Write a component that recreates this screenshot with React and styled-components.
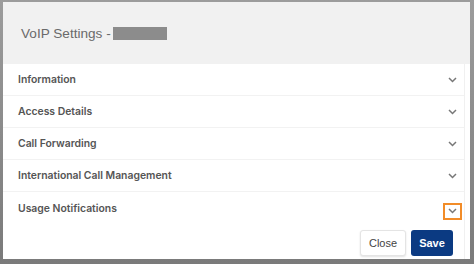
import React from "react";
import styled, { createGlobalStyle } from "styled-components";

const Global = createGlobalStyle`
  html, body { margin: 0; padding: 0; }
  body { background: #8d8d8d; width: 474px; height: 264px; overflow: hidden; }
`;

const Backdrop = styled.div`
  width: 474px;
  height: 264px;
  box-sizing: border-box;
  padding: 2px 4px 5px 3px;
  background: linear-gradient(#9c9c9c, #7a7a7a);
`;

const Modal = styled.div`
  height: 100%;
  background: #fff;
  display: flex;
  flex-direction: column;
  font-family: Inter, "Liberation Sans", sans-serif;
`;

const Header = styled.div`
  height: 62px;
  background: #f1f1f1;
  display: flex;
  align-items: center;
  padding-left: 18px;
  box-sizing: border-box;
`;

const Title = styled.h1`
  margin: 0;
  font-family: "Liberation Sans", Arial, sans-serif;
  font-weight: 400;
  font-size: 13.6px;
  color: #6a6a6a;
  display: flex;
  align-items: center;
  gap: 2px;
`;

const Redacted = styled.span`
  display: inline-block;
  width: 54px;
  height: 13px;
  background: #8c8c8c;
`;

const Body = styled.div`
  flex: 1;
  margin-right: 5px;
  border-right: 1px solid #f0f0f0;
  display: flex;
  flex-direction: column;
`;

const Row = styled.div`
  height: 32px;
  box-sizing: border-box;
  display: flex;
  align-items: center;
  justify-content: space-between;
  padding: 0 2px 0 15px;
  border-bottom: ${(p) => (p.$last ? "none" : "1px solid #f2f2f2")};
`;

const Label = styled.span`
  font-size: 10.4px;
  font-weight: 600;
  color: #555;
`;

const Chevron = styled.span`
  width: 19px;
  height: 17px;
  box-sizing: border-box;
  display: flex;
  align-items: center;
  justify-content: center;
  border: 2px solid ${(p) => (p.$focus ? "#f28c28" : "transparent")};
  margin-top: ${(p) => (p.$focus ? "6px" : "0")};
`;

const Footer = styled.div`
  display: flex;
  justify-content: flex-end;
  gap: 5px;
  padding: 0 11px 0 0;
  margin-top: auto;
  margin-bottom: 3px;
`;

const Button = styled.button`
  height: 26px;
  border-radius: 3px;
  font-family: "Liberation Sans", Arial, sans-serif;
  font-size: 11px;
  padding: 0;
  width: ${(p) => (p.$primary ? "42px" : "46px")};
  border: ${(p) => (p.$primary ? "none" : "1px solid #e4e4e4")};
  background: ${(p) => (p.$primary ? "#0b3a82" : "#fff")};
  color: ${(p) => (p.$primary ? "#fff" : "#444")};
  font-weight: ${(p) => (p.$primary ? 700 : 400)};
  box-shadow: ${(p) => (p.$primary ? "none" : "0 1px 2px rgba(0,0,0,0.12)")};
`;

const ChevronIcon = () => (
  <svg width="9" height="6" viewBox="0 0 9 6">
    <path d="M1 1l3.5 3.5L8 1" fill="none" stroke="#777" strokeWidth="1.5" />
  </svg>
);

const items = [
  "Information",
  "Access Details",
  "Call Forwarding",
  "International Call Management",
  "Usage Notifications",
];

export default function App() {
  return (
    <>
      <Global />
      <Backdrop>
        <Modal>
          <Header>
            <Title>
              VoIP Settings - <Redacted />
            </Title>
          </Header>
          <Body>
            {items.map((t, i) => (
              <Row key={t} $last={i === items.length - 1}>
                <Label>{t}</Label>
                <Chevron $focus={i === items.length - 1}>
                  <ChevronIcon />
                </Chevron>
              </Row>
            ))}
            <Footer>
              <Button>Close</Button>
              <Button $primary>Save</Button>
            </Footer>
          </Body>
        </Modal>
      </Backdrop>
    </>
  );
}
